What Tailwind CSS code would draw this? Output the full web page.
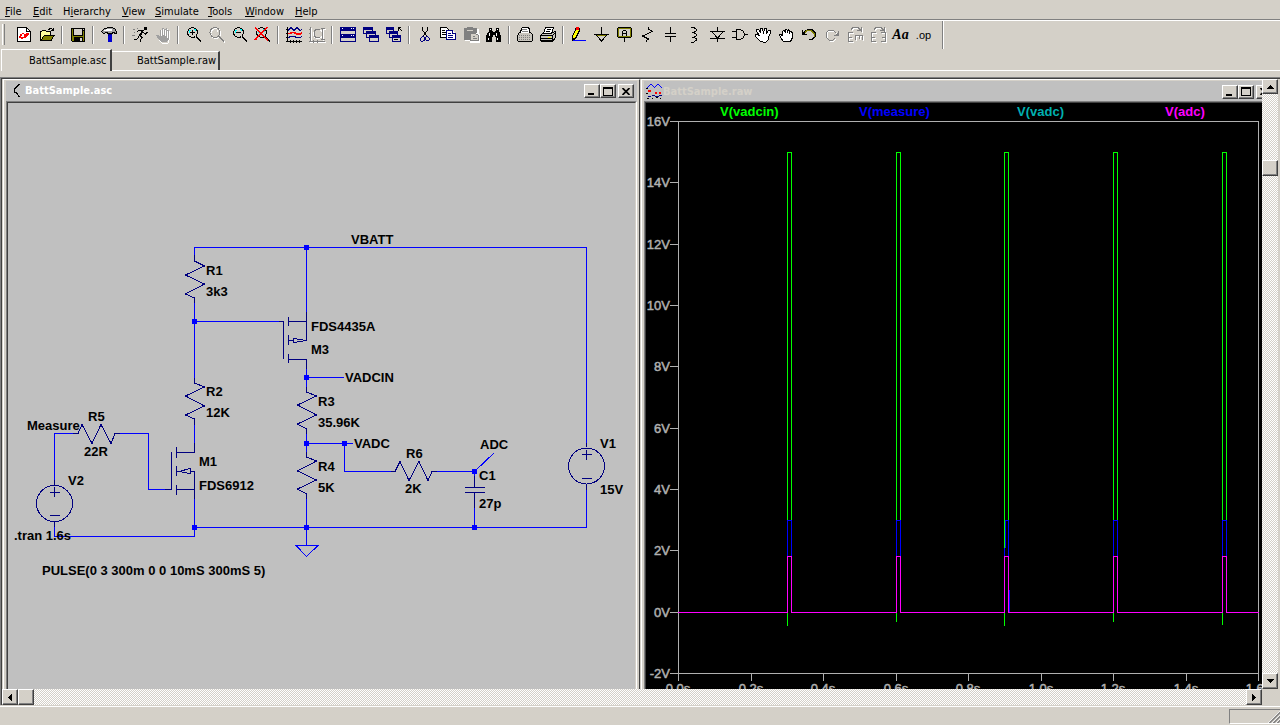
<!DOCTYPE html>
<html lang="en">
<head>
<meta charset="utf-8">
<title>BattSample</title>
<script src="https://cdn.jsdelivr.net/npm/@tailwindcss/browser@4"></script>
</head>
<body class="h-screen overflow-hidden flex flex-col bg-[#d4d0c8] text-black text-[11px] leading-[14px] font-['DejaVu_Sans_Condensed','DejaVu_Sans',sans-serif]">

<!-- Menu bar -->
<nav class="flex items-center h-5 shrink-0 border-b border-[#808080] pt-1 pl-[5px] gap-3 whitespace-nowrap">
  <button class="w-4 text-left"><u>F</u>ile</button>
  <button class="w-[18px] text-left"><u>E</u>dit</button>
  <button class="w-[47px] text-left">H<u>i</u>erarchy</button>
  <button class="w-[21px] text-left"><u>V</u>iew</button>
  <button class="w-[41px] text-left"><u>S</u>imulate</button>
  <button class="w-[25px] text-left"><u>T</u>ools</button>
  <button class="w-[38px] text-left"><u>W</u>indow</button>
  <button class="w-[22px] text-left"><u>H</u>elp</button>
</nav>

<!-- Toolbar -->
<div role="toolbar" class="flex items-stretch h-[29px] shrink-0 border-t border-white pl-[2px] [&_button]:w-[23px] [&_button]:flex [&_button]:items-center [&_button]:justify-center [&_button]:shrink-0 [&_svg]:size-4 [&_svg]:overflow-visible [&_hr]:w-[2px] [&_hr]:h-[18px] [&_hr]:mx-[3px] [&_hr]:self-center [&_hr]:border-0 [&_hr]:border-l [&_hr]:border-l-[#808080] [&_hr]:bg-white [&_hr]:shrink-0">
  <span class="w-[3px] h-[21px] mt-[3px] mr-[7px] border-l border-white border-r border-r-[#808080]"></span>
  <button aria-label="New schematic"><svg viewBox="0 0 16 16" shape-rendering="crispEdges"><path d="M1.500.5h9l4 4v10h-13z" fill="#fff" stroke="#000"/><path d="M10.500.5v4h4" fill="none" stroke="#000"/><path d="M3 11V9h1V7h2V6h2v1H6v2H5v1h3V8h1V7h1V6h3v2h-1v1h-1v1h-1v1H7v1H5v-1z" fill="#f00"/><path d="M8 7h3v1H8z" fill="#f00"/></svg></button>
  <button aria-label="Open"><svg viewBox="0 0 16 16" shape-rendering="crispEdges"><path d="M1.500 13.500v-9h1l1-1h3l1 1h4v3" fill="#ffff9c" stroke="#000"/><path d="M2 13.500L5.500 8h10L12 13.500z" fill="#808000" stroke="#000"/><path d="M9.500 2.500l2-1h1l2 2M14.500 1v3M12 3.500h3" fill="none" stroke="#000"/></svg></button>
  <hr>
  <button aria-label="Save"><svg viewBox="0 0 16 16" shape-rendering="crispEdges"><path d="M1 .5h14v14H2l-1-1z" fill="#000"/><path d="M2 1.500h1v7h10v-5h1v10H2z" fill="#808000"/><path d="M4 1.500h8v6H4z" fill="#d4d0c8"/><path d="M4 9.500h9v4H4z" fill="#000"/><path d="M10 10.500h2v3h-2zM13 1.500h1v1h-1z" fill="#d4d0c8"/></svg></button>
  <hr>
  <button aria-label="Control panel"><svg viewBox="0 0 16 16" shape-rendering="crispEdges"><path d="M.5 4.500l3-3h2l1-1h5l3 2 1 3v1h-1l-2-1h-1v1h-5v-1h-2l-1 1h-1z" fill="#a0a0a0" stroke="#000"/><path d="M3 3h2V2h6v2H3z" fill="#fff"/><path d="M7 7h4v8H7z" fill="#0000d0"/><path d="M7 7h4v1H7zM7 7h1v2H7z" fill="#000080"/></svg></button>
  <hr>
  <button aria-label="Run"><svg viewBox="0 0 16 16" shape-rendering="crispEdges" fill="none" stroke="#000"><path d="M12 0h3v3h-3z" fill="#000" stroke="none"/><path d="M11.500 3.500l-3 3-2 3M10.500 3.500L6.500 3.500 4.500 5.500M11.500 5.500l2 1.500 2-2M8 8.500l2 2-2 3v1.500M7 9.500l-2 2.500H1.500"/><path d="M10.500 4.500l-3 4.500" stroke-width="2"/><path d="M1 2.500h2M2 5.500h1M0 8.500h3M5 1.500h1" stroke="#808080"/></svg></button>
  <button aria-label="Halt" disabled><svg viewBox="0 0 16 16" shape-rendering="crispEdges"><path d="M6 15L2 10 1 8h2l2 2V3h1V2h1v6V1h2v7V1h2v7V3h2v9l-1 3z" fill="none" stroke="#fff" transform="translate(1 1)"/><path d="M6 15L2 10 1 8h2l2 2V3h2V1h2v1h2V1h1v2h2v9l-2 3z" fill="#a0a0a0"/><path d="M6.500 3v6M8.500 2v6M10.500 3v6M12.500 4v7" stroke="#fff"/></svg></button>
  <hr>
  <button aria-label="Zoom in"><svg viewBox="0 0 16 16" shape-rendering="crispEdges"><path d="M3.500 1.500h1l1-1h2l3 2 1 2v2l-2 3-2 1h-2l-3-2-1-2v-2z" fill="#d4d0c8" stroke="#000"/><path d="M3 3h2v1H4v2H3zM8 2h2v2H9V3H8z" fill="#0ff"/><path d="M4 5.500h5M6.500 3v5" stroke="#000"/><path d="M10 9.500l5 5" stroke="#000" stroke-width="2"/></svg></button>
  <button aria-label="Pan" disabled><svg viewBox="0 0 16 16" shape-rendering="crispEdges" fill="none"><g stroke="#fff" transform="translate(1 1)"><circle cx="6" cy="5.500" r="5"/><path d="M10 9.500l5 5" stroke-width="2"/></g><g stroke="#808080"><circle cx="6" cy="5.500" r="5"/><path d="M10 9.500l5 5" stroke-width="2"/><path d="M8.500 3v2" stroke="#fff"/></g></svg></button>
  <button aria-label="Zoom out"><svg viewBox="0 0 16 16" shape-rendering="crispEdges"><path d="M3.500 1.500h1l1-1h2l3 2 1 2v2l-2 3-2 1h-2l-3-2-1-2v-2z" fill="#d4d0c8" stroke="#000"/><path d="M3 3h2v1H4v2H3zM8 2h2v2H9V3H8z" fill="#0ff"/><path d="M4 5.500h5" stroke="#000"/><path d="M10 9.500l5 5" stroke="#000" stroke-width="2"/></svg></button>
  <button aria-label="Zoom to fit"><svg viewBox="0 0 16 16" shape-rendering="crispEdges"><path d="M3.500 1.500h1l1-1h2l3 2 1 2v2l-2 3-2 1h-2l-3-2-1-2v-2z" fill="#d4d0c8" stroke="#000"/><path d="M3 4h2v2H3zM8 2h2v3H8z" fill="#0ff"/><path d="M10 9.500l5 5" stroke="#000" stroke-width="2"/><path d="M0 1l13 12M12.500 0L0 13" stroke="#f00" stroke-width="1.500"/></svg></button>
  <hr>
  <button aria-label="Autorange"><svg viewBox="0 0 16 16" shape-rendering="crispEdges" fill="none"><path d="M1.500 0v15M0 14.500h16M4.500 13v3M7.500 13v3M10.500 13v3M13.500 13v3M0 2.500h2M0 6.500h2M0 10.500h2" stroke="#000"/><path d="M2 3.500l3-3 3 3 3-3 3 3 2-1" stroke="#000080"/><path d="M2 6.500h2l2-1h2l3 1.500h3l2-1" stroke="#f00" stroke-width="1.500"/><path d="M2 10.500l3-1h3l3 1h3l2-1" stroke="#000080"/></svg></button>
  <button aria-label="Setup plot" disabled><svg viewBox="0 0 16 16" shape-rendering="crispEdges" fill="none"><g stroke="#fff" transform="translate(1 1)"><path d="M1.500 0v15M0 14.500h16M13.500 1v12M11.500 1.500h4"/><circle cx="8" cy="6" r="4.500"/></g><g stroke="#808080"><path d="M1.500 0v15M0 14.500h16M4.500 13v3M8.500 13v3M0 2.500h2M0 6.500h2M0 10.500h2M13.500 1v12M11.500 1.500h4M11.500 12.500h4"/><path d="M11 2.500H7l-2 2v4l2 2h4"/></g></svg></button>
  <hr>
  <button aria-label="Tile windows"><svg viewBox="0 0 16 16" shape-rendering="crispEdges"><path d="M0 0h16v15H0z" fill="#000080"/><path d="M1 4h14v3H1zM1 11h14v3H1z" fill="#d4d0c8"/><path d="M2 1h1v1H2zM11 1h1v1h-1zM13 1h1v1h-1zM2 8h1v1H2zM11 8h1v1h-1zM13 8h1v1h-1z" fill="#fff"/></svg></button>
  <button aria-label="Cascade windows"><svg viewBox="0 0 16 16" shape-rendering="crispEdges" stroke="#000080" fill="#d4d0c8"><path d="M.5.500h9v6h-9zM3.500 4.500h9v6h-9zM6.500 8.500h9v6h-9z"/><path d="M.5 1.500h9M3.500 5.500h9M6.500 9.500h9" stroke-width="2"/></svg></button>
  <button aria-label="Close all windows"><svg viewBox="0 0 16 16" shape-rendering="crispEdges" stroke="#000080" fill="#d4d0c8"><path d="M.5.500h7v6h-7zM3.500 4.500h8v6h-8zM6.500 8.500h8v6h-8z"/><path d="M.5 1.500h7M3.500 5.500h8M6.500 9.500h8" stroke-width="2"/><path d="M8 12.500h4M12.500 1v3M12 .5h3M13 1l3 3" stroke="#000"/></svg></button>
  <hr>
  <button aria-label="Cut"><svg viewBox="0 0 16 16" shape-rendering="crispEdges" fill="none"><path d="M5.500 0v3l4 6M10.500 0v3l-4 6" stroke="#000"/><path d="M5.500 9.500h1l1 1v3h-1l-1 1h-1l-1-1v-2zM10.500 9.500h-1l-1 1v2l1 1h2l1-1v-1z" stroke="#000080"/></svg></button>
  <button aria-label="Copy"><svg viewBox="0 0 16 16" shape-rendering="crispEdges" fill="#fff"><path d="M.5.500h6l3 3v7h-9z" stroke="#000"/><path d="M2 3.500h3M2 5.500h5M2 7.500h5" stroke="#000"/><path d="M6.500 3.500h6l3 3v6h-9z" stroke="#000080"/><path d="M12.500 3.500v3h3M8 6.500h3M8 8.500h5M8 10.500h5" stroke="#000080"/></svg></button>
  <button aria-label="Paste" disabled><svg viewBox="0 0 16 16" shape-rendering="crispEdges"><path d="M2 2h14v5h1v9H7v-2H2z" fill="#fff"/><path d="M1 1h3V0h6v1h4v5H7v7H1z" fill="#808080"/><path d="M4 3h6v1H4z" fill="#d4d0c8"/><path d="M7.500 6.500h5l3 2v5h-8z" fill="#d4d0c8" stroke="#808080"/><path d="M10 9.500h2M10 11.500h4" stroke="#808080"/></svg></button>
  <button aria-label="Find"><svg viewBox="0 0 16 16" shape-rendering="crispEdges"><path d="M3 1h3v3h1v1h2V4h1V1h3v3l1 2 1 4v5h-5v-5H9V8H7v2H6v5H0v-5l1-4 2-2z" fill="#000"/><path d="M3 6h1v3H3zM10 6h1v3h-1zM2 11h1v2H2zM11 11h1v2h-1zM4 2h1v1H4zM11 2h1v1h-1z" fill="#fff"/></svg></button>
  <hr>
  <button aria-label="Print setup"><svg viewBox="0 0 16 16" shape-rendering="crispEdges" stroke="#000"><path d="M.5 8.500l2-3h11l2 2v6l-1 1h-13l-1-1z" fill="#c8c4bc"/><path d="M3.500 5.500l1-4 1-1h6l1 2v3" fill="#fff"/><path d="M5 2.500h5M5 4.500h6" stroke="#808080"/><path d="M2 8.500h12M2 10.500h12M2 12.500h12" stroke="#808080" stroke-dasharray="1 1"/></svg></button>
  <button aria-label="Print"><svg viewBox="0 0 16 16" shape-rendering="crispEdges" stroke="#000"><path d="M.5 8.500l3-3h9l3-1v6l-3 4h-11l-1-2z" fill="#c8c4bc"/><path d="M3.500 6.500l2-6h8l-2 6z" fill="#fff"/><path d="M7 2.500h4M6 4.500h4"/><path d="M.5 8.500h12l3-3M1 11.500h12M12.500 8.500v6M2 13.500h10" fill="none"/><path d="M8 10h3" stroke="#ff0"/></svg></button>
  <hr>
  <button aria-label="Wire"><svg viewBox="0 0 16 16" shape-rendering="crispEdges"><path d="M1 13.500h14" stroke="#00f"/><path d="M5.500.500l3 1v2l-4 8-3 2v-4z" fill="#ff0" stroke="#000"/><path d="M5 0h3v3H5z" fill="#f00"/><path d="M1 11h3v2H1z" fill="#000"/></svg></button>
  <button aria-label="Ground"><svg viewBox="0 0 16 16" shape-rendering="crispEdges"><path d="M7.500 0v7M0 7.500h15" stroke="#000"/><path d="M2 8l5.500 6L13 8" fill="none" stroke="#000"/><path d="M3 8.500h9" stroke="#808000"/></svg></button>
  <button aria-label="Label net"><svg viewBox="0 0 16 16" shape-rendering="crispEdges" fill="none"><path d="M1.500.500h12l1 1v8l-1 1h-12l-1-1v-8z" stroke="#000"/><path d="M2 1.500h11M2 9.500h11M1.500 1v9M13.500 1v9" stroke="#808000"/><path d="M5.500 8.500v-4l1-1h2l1 1v4M6 6.500h3M7.500 11v4" stroke="#000"/></svg></button>
  <button aria-label="Resistor"><svg viewBox="0 0 16 16" shape-rendering="crispEdges" fill="none" stroke="#000"><path d="M8.500 0v2l4 2.500L2.500 9l6 3-2 1.500V15"/></svg></button>
  <button aria-label="Capacitor"><svg viewBox="0 0 16 16" shape-rendering="crispEdges" stroke="#000"><path d="M7.500 0v6M2 6.500h11M2 9.500h11M7.500 9v6"/></svg></button>
  <button aria-label="Inductor"><svg viewBox="0 0 16 16" shape-rendering="crispEdges" fill="none" stroke="#000"><path d="M5 .5h3l2 1.500v2L8 5.500H6h2L10 7v2L8 10.500H6h2l2 1v2L8 15H5"/></svg></button>
  <button aria-label="Diode"><svg viewBox="0 0 16 16" shape-rendering="crispEdges" fill="none" stroke="#000"><path d="M8.500 0v4M1 4.500h15M3 5l5.500 6L14 5M1 11.500h15M8.500 11v4"/></svg></button>
  <button aria-label="Component"><svg viewBox="0 0 16 16" shape-rendering="crispEdges" fill="none" stroke="#000"><path d="M4.500 2.500h4l3 2 1 3-1 3-3 2h-4zM0 4.500h4M0 10.500h4M12 7.500h4"/></svg></button>
  <button aria-label="Move"><svg viewBox="0 0 16 16" shape-rendering="crispEdges" fill="#fff" stroke="#000"><path d="M5.500 14.500l-5-5v-2h2l2 1-3-4v-2h2l2 3v-4h2l1 5 1-5h2v5l2-3h2v3l-2 3v3l-3 3z"/></svg></button>
  <button aria-label="Drag"><svg viewBox="0 0 16 16" shape-rendering="crispEdges" fill="#fff" stroke="#000"><path d="M5.500 14.500l-3-4-1-3h1l2 1v-4l1-1 1 1 1-2h1l1 1 1-1 1 2h2l1 2v4l-2 4z"/><path d="M7.500 4v2M9.500 4v2M11.500 5v2"/></svg></button>
  <button aria-label="Undo"><svg viewBox="0 0 16 16" shape-rendering="crispEdges" fill="none"><path d="M2 6.500l3-3 2-1h4l3 3v4l-3 3H8" stroke="#000"/><path d="M4 5.500l2-2h4l3 3v3" stroke="#808000"/><path d="M1 3v5h5V7H4V6H3V5H2V3z" fill="#000"/></svg></button>
  <button aria-label="Redo" disabled><svg viewBox="0 0 16 16" shape-rendering="crispEdges" fill="none"><path d="M13 7l-3-3H5L3 6v5l3 3h4l2-2" stroke="#fff"/><path d="M12 6L9.500 3.500h-5L2 6v4l3 3h4l2-2" stroke="#808080"/><path d="M15 4v5h-5V8h2V7h1V6h1V4z" fill="#808080"/></svg></button>
  <button aria-label="Rotate" disabled><svg viewBox="0 0 16 16" shape-rendering="crispEdges" fill="none"><g stroke="#fff" transform="translate(1 1)"><path d="M6 5.500H1.500v9H6M2 10h3M8.500 13V8.500h7V13M12.500 9v3M4 2.500l2-2h5l3 3V0"/></g><g stroke="#808080"><path d="M6 5.500H1.500v9H6M2 10h3M8.500 13V8.500h7V13M12.500 9v3M4 2.500l2-2h5l3 3V0M10 3.500h4"/></g></svg></button>
  <button aria-label="Mirror" disabled><svg viewBox="0 0 16 16" shape-rendering="crispEdges" fill="none"><g stroke="#fff" transform="translate(1 1)"><path d="M6 5.500H1.500v9H6M2 10h3M11 5.500h4.500v9H11M12 10h3M4 2.500l2-2h5l3 3V0"/></g><g stroke="#808080"><path d="M6 5.500H1.500v9H6M2 10h3M11 5.500h4.500v9H11M12 10h3M4 2.500l2-2h5l3 3V0M10 3.500h4"/></g></svg></button>
  <button aria-label="Text" class="font-['Liberation_Serif',serif] italic font-bold text-[14px]">Aa</button>
  <button aria-label="SPICE directive" class="font-['Liberation_Sans',sans-serif] text-[11px]">.op</button>
  <span class="ml-[7px] w-[2px] border-l border-[#808080] bg-white"></span>
</div>

<!-- Document tabs -->
<div class="shrink-0 h-7 pb-[6px] pl-px">
  <div role="tablist" class="flex h-[22px] items-stretch">
    <button role="tab" aria-selected="true" class="w-[111px] border-t border-l border-white border-r-2 border-r-[#404040] pl-[27px] text-left">BattSample.asc</button>
    <div class="flex-1 border-b border-white pt-[2px] flex">
      <button role="tab" aria-selected="false" class="w-[108px] border-t border-white border-r-2 border-r-[#404040] pl-[25px] text-left">BattSample.raw</button>
    </div>
  </div>
</div>

<!-- MDI workspace -->
<main class="flex-1 min-h-0 flex flex-col border-t border-l border-[#808080]">
 <div class="flex-1 min-h-0 flex flex-col border-t border-l border-[#404040]">
  <div class="flex-1 min-h-0 flex">
    <div class="flex-1 min-w-0 grid grid-cols-[638fr_622fr]">

      <!-- Schematic window -->
      <section class="ml-px min-w-0 min-h-0 flex flex-col overflow-hidden border-t border-l border-white border-r border-r-[#404040] pt-px px-[2px]">
        <header class="h-5 shrink-0 flex items-center bg-[#c0c0c0] pr-[3px]">
          <svg class="w-4 h-4 ml-[3px] shrink-0" viewBox="0 0 16 16" shape-rendering="crispEdges" fill="none" stroke="#000"><path d="M10.500 1l-3 3-2 2v3l2 1 3 4"/></svg>
          <h1 class="flex-1 font-bold text-white">BattSample.asc</h1>
          <button aria-label="Minimize" class="w-4 h-[14px] bg-[#d4d0c8] border border-white border-r-[#404040] border-b-[#404040] shadow-[inset_-1px_-1px_#808080] flex items-end pl-[3px] pb-[2px]"><span class="block w-[6px] h-[2px] bg-black"></span></button>
          <button aria-label="Maximize" class="w-4 h-[14px] bg-[#d4d0c8] border border-white border-r-[#404040] border-b-[#404040] shadow-[inset_-1px_-1px_#808080] flex items-center pl-[2px]"><span class="block w-[10px] h-[9px] border border-t-2 border-black"></span></button>
          <button aria-label="Close" class="w-4 h-[14px] ml-[2px] bg-[#d4d0c8] border border-white border-r-[#404040] border-b-[#404040] shadow-[inset_-1px_-1px_#808080] flex items-center pl-[3px]"><svg class="w-2 h-[7px]" viewBox="0 0 8 7" stroke="#000" stroke-width="1.700"><path d="M.5 0l7 7M7.500 0l-7 7"/></svg></button>
        </header>
        <div class="flex-1 min-h-0 border-t border-l border-[#808080] border-r border-r-white">
         <div class="h-full overflow-hidden border-t border-l border-[#404040] border-r border-r-[#d4d0c8] bg-[#c0c0c0]">
          <svg class="block w-[627px] h-[586px]" viewBox="8 103 627 586">
            <g shape-rendering="crispEdges" fill="none" stroke="#0000ff">
              <path d="M194.500 255V247.500H586.500V443M306.500 247v65M194.500 303v75M194.500 321.500H279M194.500 424v19M306.500 368v19M306.500 377.500h37M306.500 434v18M306.500 443.500h46M344.500 443v28.500H391M437 471.500h37M474.500 471v5M474.500 508v19M306.500 499v46M194.500 499v37.500H54.500V527M194 527.500h392.500V490M148.500 489.500H165M148.500 490v-56.500H120M73 433.500H54.500V480"/>
              <path d="M296 545.500h22l-11.500 11zM474.500 471.500l20-19"/>
            </g>
            <g shape-rendering="crispEdges" fill="none" stroke="#000080">
              <path d="M194.500 255v6l10 5-19 9 19 9-19 10 9 4v5"/>
              <path d="M194.500 378v5l10 4-19 9 19 10-19 9 9 4v6"/>
              <path d="M306.500 387v5l10 4-19 9 19 10-19 9 9 5v5"/>
              <path d="M306.500 452v5l10 4-19 10 19 9-19 9 9 5v5"/>
              <path d="M73 433.500h5l4-9 10 19 9-19 10 19 4-10h5"/>
              <path d="M391 471.500h4l5-10 9 19 10-19 9 19 4-9h5"/>
              <path d="M194.500 443v9.500H176M176.500 447v11M176.500 466v10M176.500 485v10M171.500 452v37.500H165M176 471.500h3l11-3v5l-11-2M190 471.500h4.500V499M176 489.500h18"/>
              <path d="M279 321.500h4.500V359M288.500 317v9M288.500 335v10M288.500 354v9M288 321.500h18M306.500 312v28.500l-13-2v4l13-2M288 340.500h5M288 359.500h18.500v9"/>
              <path d="M474.500 476v11M465 487.500h20M465 492.500h20M474.500 492v16"/>
              <path d="M54.500 480v5M54.500 522v5M50 492.500h10M54.500 487v10M50 515.500h10"/>
              <path d="M586.500 443v4M586.500 485v5M582 454.500h10M586.500 450v10M582 478.500h10"/>
              <circle cx="54.500" cy="503.500" r="18"/><circle cx="586.500" cy="466" r="18"/>
            </g>
            <path fill="#0000ff" shape-rendering="crispEdges" d="M304 245h5v5h-5zM192 319h5v5h-5zM304 375h5v5h-5zM304 441h5v5h-5zM342 441h5v5h-5zM472 469h5v5h-5zM192 525h5v5h-5zM304 525h5v5h-5zM472 525h5v5h-5z"/>
            <g class="font-['Liberation_Sans',Arial,sans-serif] font-bold text-[13px]" fill="#000">
              <text x="351" y="244">VBATT</text>
              <text x="206" y="275">R1</text><text x="206" y="296">3k3</text>
              <text x="311" y="331">FDS4435A</text><text x="311" y="354">M3</text>
              <text x="345" y="382">VADCIN</text>
              <text x="206" y="396">R2</text><text x="206" y="417">12K</text>
              <text x="318" y="406">R3</text><text x="318" y="427">35.96K</text>
              <text x="354" y="448">VADC</text>
              <text x="318" y="471">R4</text><text x="318" y="492">5K</text>
              <text x="406" y="458">R6</text><text x="405" y="493">2K</text>
              <text x="480" y="449">ADC</text>
              <text x="479" y="480">C1</text><text x="479" y="508">27p</text>
              <text x="600" y="448">V1</text><text x="600" y="494">15V</text>
              <text x="199" y="466">M1</text><text x="199" y="490">FDS6912</text>
              <text x="27" y="430">Measure</text>
              <text x="88" y="421">R5</text><text x="84" y="456">22R</text>
              <text x="68" y="485">V2</text>
              <text x="14" y="540">.tran 1.6s</text>
              <text x="42" y="575">PULSE(0 3 300m 0 0 10mS 300mS 5)</text>
            </g>
          </svg>
         </div>
        </div>
      </section>

      <!-- Waveform window, running on past the visible area -->
      <div class="min-w-0 min-h-0 overflow-hidden flex">
      <section class="ml-px min-h-0 w-[calc(100%+10px)] shrink-0 flex flex-col border-t border-l border-white pt-px pl-[2px]">
        <header class="h-5 shrink-0 flex items-center bg-[#c0c0c0] pt-px pr-px">
          <svg class="w-4 h-4 ml-[2px] shrink-0" viewBox="0 0 16 16" shape-rendering="crispEdges" fill="none"><path d="M1 4l4-4 3.500 3.500L12 0l4 4" stroke="#00f"/><path d="M2 7h3M9 9h2M13 9h2" stroke="#f00" stroke-width="2"/><path d="M2 12.500h3M6 11.500h3M9 12.500h4M13 11.500h3" stroke="#000080"/><path d="M0 4.500h2M0 9.500h2M1 14.500h2M6 14.500h1M10 13.500h2M14 14.500h1" stroke="#000"/></svg>
          <h2 class="flex-1 ml-px font-bold text-[#d4d0c8]">BattSample.raw</h2>
          <button aria-label="Minimize" class="w-4 h-[14px] bg-[#d4d0c8] border border-white border-r-[#404040] border-b-[#404040] shadow-[inset_-1px_-1px_#808080] flex items-end pl-[3px] pb-[2px]"><span class="block w-[6px] h-[2px] bg-black"></span></button>
          <button aria-label="Maximize" class="w-4 h-[14px] bg-[#d4d0c8] border border-white border-r-[#404040] border-b-[#404040] shadow-[inset_-1px_-1px_#808080] flex items-center pl-[2px]"><span class="block w-[10px] h-[9px] border border-t-2 border-black"></span></button>
          <button aria-label="Close" class="w-4 h-[14px] ml-[2px] bg-[#d4d0c8] border border-white border-r-[#404040] border-b-[#404040] shadow-[inset_-1px_-1px_#808080] flex items-center pl-[3px]"><svg class="w-2 h-[7px]" viewBox="0 0 8 7" stroke="#000" stroke-width="1.700"><path d="M.5 0l7 7M7.500 0l-7 7"/></svg></button>
        </header>
        <div class="flex-1 min-h-0 border-t border-l border-[#808080]">
         <div class="h-full overflow-hidden border-t border-l border-[#404040] bg-black">
          <svg class="block w-[626px] h-[586px]" viewBox="646 103 626 586">
            <path shape-rendering="crispEdges" fill="none" stroke="#b0b0b0" d="M678.500 121v560M670 121.500h588.500V681M670 673.500h588M670 182.500h8M670 244.500h8M670 305.500h8M670 366.500h8M670 428.500h8M670 489.500h8M670 550.500h8M670 612.500h8M751.500 673v8M823.500 673v8M896.500 673v8M968.500 673v8M1041.500 673v8M1113.500 673v8M1186.500 673v8"/>
            <g shape-rendering="crispEdges" fill="none">
              <path stroke="#00ff00" d="M787.500 626V152.500h4V520M896.500 622V152.500h4V524M1004.500 626V152.500h4V520M1113.500 622V152.500h4V520M1222.500 625V152.500h4V520"/>
              <path stroke="#0000ff" d="M787.500 556V520.500h4V556M896.500 556V520.500h4V556M1004.500 556v-8M1005.500 548V520.500h3V556M1009.500 590v22M1113.500 556V520.500h4V556M1222.500 556V520.500h4V556"/>
              <path stroke="#ff00ff" d="M678 612.500h109.500v-56h4v56h105v-56h4v56h104v-56h4v56h105v-56h4v56h105v-56h4v56h32"/>
            </g>
            <g class="font-['Liberation_Sans',Arial,sans-serif] font-bold text-[13px]">
              <text x="720" y="116" fill="#00ff00">V(vadcin)</text>
              <text x="859" y="116" fill="#0000ff">V(measure)</text>
              <text x="1017" y="116" fill="#00b0b0">V(vadc)</text>
              <text x="1165" y="116" fill="#ff00ff">V(adc)</text>
            </g>
            <g class="font-['Liberation_Sans',Arial,sans-serif] text-[13px]" fill="#b0b0b0" stroke="#b0b0b0" stroke-width="0.500" text-anchor="end">
              <text x="670" y="126">16V</text><text x="670" y="187">14V</text><text x="670" y="249">12V</text><text x="670" y="310">10V</text><text x="670" y="371">8V</text><text x="670" y="433">6V</text><text x="670" y="494">4V</text><text x="670" y="555">2V</text><text x="670" y="617">0V</text><text x="670" y="678">-2V</text>
            </g>
            <g class="font-['Liberation_Sans',Arial,sans-serif] text-[13px]" fill="#b0b0b0" stroke="#b0b0b0" stroke-width="0.500" text-anchor="middle">
              <text x="678" y="693">0.0s</text><text x="751" y="693">0.2s</text><text x="823" y="693">0.4s</text><text x="896" y="693">0.6s</text><text x="968" y="693">0.8s</text><text x="1041" y="693">1.0s</text><text x="1113" y="693">1.2s</text><text x="1186" y="693">1.4s</text><text x="1258" y="693">1.6s</text>
            </g>
          </svg>
         </div>
        </div>
      </section>
      </div>
    </div>

    <!-- Vertical scroll bar -->
    <div class="w-[18px] shrink-0 pr-[2px] flex flex-col bg-[#d4d0c8]">
      <div class="flex-1 flex flex-col bg-[repeating-conic-gradient(#fff_0_25%,#d4d0c8_0_50%)] bg-[length:2px_2px]">
        <button aria-label="Scroll up" class="h-[15px] bg-[#d4d0c8] border border-white border-r-[#404040] border-b-[#404040] shadow-[inset_-1px_-1px_#808080] flex items-center justify-center"><svg class="w-[7px] h-1" viewBox="0 0 7 4" shape-rendering="crispEdges"><path d="M3 0h1v1h1v1h1v1h1v1H0V3h1V2h1V1h1z"/></svg></button>
        <button aria-label="Vertical scroll thumb" class="mt-[66px] h-4 bg-[#d4d0c8] border border-white border-r-[#404040] border-b-[#404040] shadow-[inset_-1px_-1px_#808080]"></button>
        <button aria-label="Scroll down" class="mt-auto h-4 bg-[#d4d0c8] border border-white border-r-[#404040] border-b-[#404040] shadow-[inset_-1px_-1px_#808080] flex items-center justify-center"><svg class="w-[7px] h-1" viewBox="0 0 7 4" shape-rendering="crispEdges"><path d="M0 0h7v1H6v1H5v1H4v1H3V3H2V2H1V1H0z"/></svg></button>
      </div>
    </div>
  </div>

  <!-- Horizontal scroll bar -->
  <div class="h-4 shrink-0 flex pr-[18px]">
    <div class="flex-1 flex bg-[repeating-conic-gradient(#fff_0_25%,#d4d0c8_0_50%)] bg-[length:2px_2px]">
      <button aria-label="Scroll left" class="w-4 bg-[#d4d0c8] border border-white border-r-[#404040] border-b-[#404040] shadow-[inset_-1px_-1px_#808080] flex items-center justify-center"><svg class="w-1 h-[7px]" viewBox="0 0 4 7" shape-rendering="crispEdges"><path d="M4 0v7H3V6H2V5H1V4H0V3h1V2h1V1h1V0z"/></svg></button>
      <button aria-label="Horizontal scroll thumb" class="w-4 bg-[#d4d0c8] border border-white border-r-[#404040] border-b-[#404040] shadow-[inset_-1px_-1px_#808080]"></button>
      <button aria-label="Scroll right" class="ml-auto w-4 bg-[#d4d0c8] border border-white border-r-[#404040] border-b-[#404040] shadow-[inset_-1px_-1px_#808080] flex items-center justify-center"><svg class="w-1 h-[7px]" viewBox="0 0 4 7" shape-rendering="crispEdges"><path d="M0 0v7h1V6h1V5h1V4h1V3H3V2H2V1H1V0z"/></svg></button>
    </div>
  </div>
 </div>
</main>

<!-- Status bar -->
<footer class="h-[19px] mt-px shrink-0 border-t border-white pt-[2px] pb-px flex justify-end">
  <div class="w-[51px] border-t border-l border-[#808080] border-b border-b-white flex justify-end items-end">
    <svg class="w-3 h-3" viewBox="0 0 12 12" fill="none"><path d="M0 12L12 0M4 12l8-8M8 12l4-4" stroke="#fff"/><path d="M1 12.500L12.500 1M5 12.500L12.500 5M9 12.500L12.500 9" stroke="#808080" stroke-width="1.500"/></svg>
  </div>
</footer>
</body>
</html>
